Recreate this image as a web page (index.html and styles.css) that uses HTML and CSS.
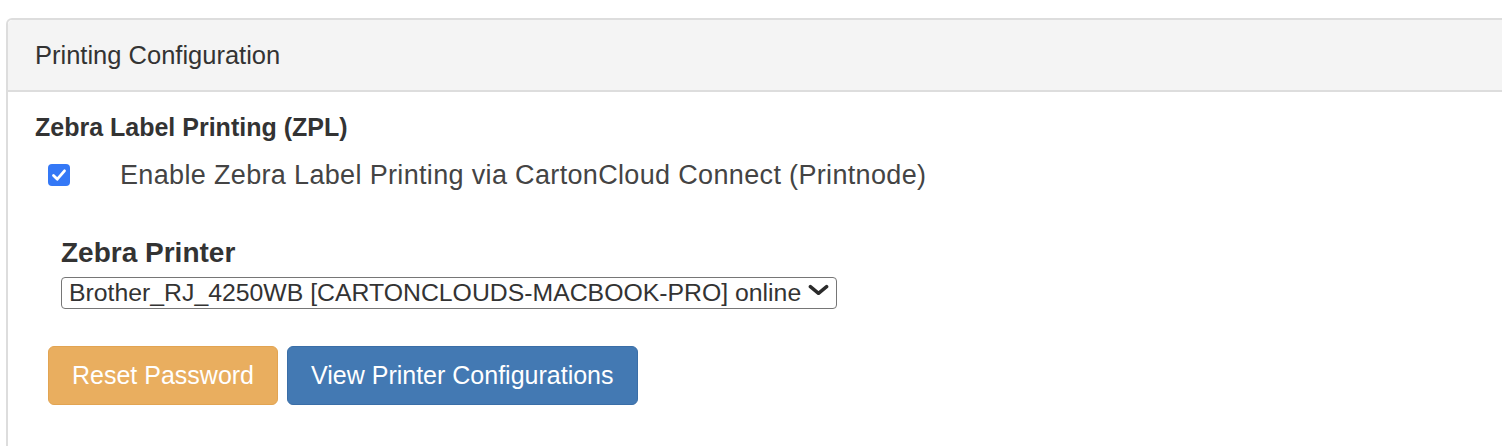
FILE: index.html
```html
<!DOCTYPE html>
<html lang="en">
<head>
<meta charset="utf-8">
<title>Printing Configuration</title>
<link rel="stylesheet" href="styles.css">
</head>
<body>
<div class="panel">
  <div class="panel-heading">Printing Configuration</div>
  <div class="panel-body">
    <h4 class="section-title">Zebra Label Printing (ZPL)</h4>
    <label class="check-row">
      <span class="checkbox">
        <svg viewBox="0 0 22 22" width="22" height="22" aria-hidden="true">
          <path d="M5.5 11.5 L9.3 15.2 L16.5 6.8" fill="none" stroke="#fff" stroke-width="2.8" stroke-linecap="round" stroke-linejoin="round"/>
        </svg>
      </span>
      <span class="check-label">Enable Zebra Label Printing via CartonCloud Connect (Printnode)</span>
    </label>
    <div class="form-group">
      <label class="field-label" for="printer">Zebra Printer</label>
      <div class="select-wrap">
        <select id="printer" class="select">
          <option>Brother_RJ_4250WB [CARTONCLOUDS-MACBOOK-PRO] online</option>
        </select>
        <svg class="chevron" viewBox="0 0 22 12" width="21" height="12" aria-hidden="true">
          <path d="M2.5 2.5 L11 9.5 L19.5 2.5" fill="none" stroke="#2b2b2b" stroke-width="3.6" stroke-linecap="round" stroke-linejoin="round"/>
        </svg>
      </div>
    </div>
    <div class="actions">
      <button class="btn btn-warning" type="button">Reset Password</button>
      <button class="btn btn-primary" type="button">View Printer Configurations</button>
    </div>
  </div>
</div>
</body>
</html>
```

FILE: styles.css
```css
* { box-sizing: border-box; }

html, body {
  margin: 0;
  padding: 0;
  background: #ffffff;
  overflow: hidden;
}

body {
  font-family: "Liberation Sans", Arial, Helvetica, sans-serif;
  color: #333333;
  padding: 18px 0 0 6px;
  height: 446px;
}

.panel {
  width: 1520px;
  height: 428px;
  border: 2px solid #dddddd;
  border-bottom: 0;
  border-radius: 6px 0 0 0;
  background: #ffffff;
}

.panel-heading {
  height: 72px;
  background: #f4f4f4;
  border-bottom: 2px solid #dddddd;
  border-radius: 5px 0 0 0;
  padding: 0 0 0 27px;
  font-size: 25.5px;
  line-height: 70px;
  color: #333333;
}

.panel-body {
  padding: 21.5px 0 0 27px;
}

.section-title {
  margin: 0;
  font-size: 25px;
  line-height: 27.5px;
  font-weight: bold;
  color: #333333;
}

.check-row {
  display: flex;
  align-items: center;
  margin: 18.5px 0 0 13px;
  height: 30px;
}

.checkbox {
  width: 22px;
  height: 22px;
  border-radius: 4px;
  background: #3478f6;
  display: flex;
}

.check-label {
  margin-left: 50px;
  font-size: 27px;
  letter-spacing: 0.34px;
  line-height: 30px;
  color: #444444;
}

.form-group {
  margin: 48.4px 0 0 26px;
}

.field-label {
  display: block;
  font-size: 28px;
  line-height: 29.7px;
  font-weight: bold;
  color: #333333;
}

.select-wrap {
  position: relative;
  width: 776px;
  margin-top: 9px;
}

.select {
  -webkit-appearance: none;
  appearance: none;
  display: block;
  width: 100%;
  height: 32px;
  margin: 0;
  padding: 0 0 0 7px;
  border: 1px solid #767676;
  border-radius: 4px;
  background: #ffffff;
  font-family: "Liberation Sans", Arial, Helvetica, sans-serif;
  font-size: 24.8px;
  line-height: 30px;
  color: #333333;
}

.chevron {
  position: absolute;
  right: 8px;
  top: 7px;
  pointer-events: none;
}

.actions {
  display: flex;
  gap: 9px;
  margin: 37px 0 0 13px;
}

.btn {
  font-family: "Liberation Sans", Arial, Helvetica, sans-serif;
  font-size: 25px;
  line-height: 35px;
  padding: 11px 23px;
  border: 1px solid transparent;
  border-radius: 6px;
  color: #ffffff;
  cursor: pointer;
}

.btn-warning {
  background: #e9ae5f;
  border-color: #e2a452;
}

.btn-primary {
  background: #4379b3;
  border-color: #3a6ea7;
}
```
